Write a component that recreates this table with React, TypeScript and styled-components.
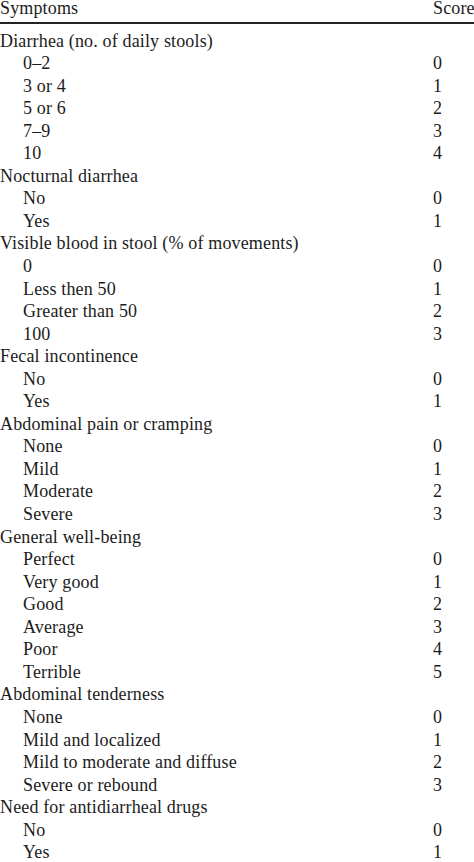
import React from "react"
import styled, { createGlobalStyle } from "styled-components"

const GlobalStyle = createGlobalStyle`
	html, body {
		margin: 0;
		padding: 0;
		background: #ffffff;
		overflow: hidden;
	}
	body {
		font-family: "Liberation Serif", "Times New Roman", serif;
		color: #1c1c1c;
	}
`

const Table = styled.div`
	width: 474px;
	margin-top: -3.5px;
	font-size: 18px;
	letter-spacing: 0.15px;
	line-height: 22.55px;
`

const HeadRow = styled.div`
	display: grid;
	grid-template-columns: 1fr 41px;
	padding-bottom: 2.5px;
	border-bottom: 2px solid #222;
	margin-bottom: 6px;
	white-space: nowrap;
`

const Row = styled.div<{ $sub?: boolean }>`
	display: grid;
	grid-template-columns: 1fr 41px;
	white-space: nowrap;
	padding-left: ${(p) => (p.$sub ? "23px" : "0")};
`

const Label = styled.span`
	overflow: visible;
`

const Score = styled.span`
	overflow: visible;
`

type Group = { title: string; items: [string, number][] }

const groups: Group[] = [
	{
		title: "Diarrhea (no. of daily stools)",
		items: [["0–2", 0], ["3 or 4", 1], ["5 or 6", 2], ["7–9", 3], ["10", 4]],
	},
	{ title: "Nocturnal diarrhea", items: [["No", 0], ["Yes", 1]] },
	{
		title: "Visible blood in stool (% of movements)",
		items: [["0", 0], ["Less then 50", 1], ["Greater than 50", 2], ["100", 3]],
	},
	{ title: "Fecal incontinence", items: [["No", 0], ["Yes", 1]] },
	{
		title: "Abdominal pain or cramping",
		items: [["None", 0], ["Mild", 1], ["Moderate", 2], ["Severe", 3]],
	},
	{
		title: "General well-being",
		items: [
			["Perfect", 0],
			["Very good", 1],
			["Good", 2],
			["Average", 3],
			["Poor", 4],
			["Terrible", 5],
		],
	},
	{
		title: "Abdominal tenderness",
		items: [
			["None", 0],
			["Mild and localized", 1],
			["Mild to moderate and diffuse", 2],
			["Severe or rebound", 3],
		],
	},
	{ title: "Need for antidiarrheal drugs", items: [["No", 0], ["Yes", 1]] },
]

const App: React.FunctionComponent = () => (
	<>
		<GlobalStyle />
		<Table>
			<HeadRow>
				<Label>Symptoms</Label>
				<Score>Score</Score>
			</HeadRow>
			{groups.map((g) => (
				<React.Fragment key={g.title}>
					<Row>
						<Label>{g.title}</Label>
						<Score />
					</Row>
					{g.items.map(([label, score]) => (
						<Row $sub key={label}>
							<Label>{label}</Label>
							<Score>{score}</Score>
						</Row>
					))}
				</React.Fragment>
			))}
		</Table>
	</>
)

export default App
